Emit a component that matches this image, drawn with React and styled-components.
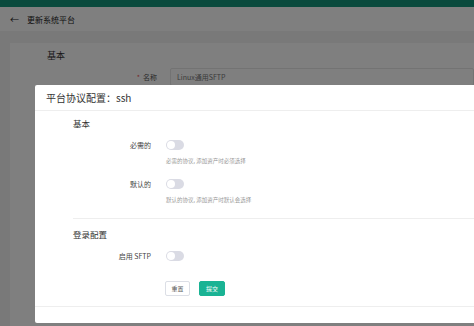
import React from "react";
import styled, { createGlobalStyle } from "styled-components";

const GlobalStyle = createGlobalStyle`
  html, body {
    margin: 0;
    padding: 0;
    background: #f2f2f2;
    font-family: "Noto Sans CJK SC", "Noto Sans", sans-serif;
    color: #333;
    overflow: hidden;
  }
`;

const Page = styled.div`
  width: 474px;
  height: 326px;
  display: flex;
  flex-direction: column;
  background: #f2f2f2;
`;

const TopBar = styled.div`
  height: 7px;
  background: #14957a;
  flex-shrink: 0;
`;

const Header = styled.div`
  height: 24px;
  background: #ffffff;
  display: flex;
  align-items: center;
  gap: 8px;
  padding-left: 10px;
  font-size: 8px;
  color: #222;
`;

const Back = styled.span`
  font-size: 9px;
  line-height: 1;
`;

const Content = styled.div`
  padding: 12px 0 0 10px;
  flex: 1;
`;

const Card = styled.div`
  background: #ffffff;
  height: 100%;
  padding: 7px 0 0 37px;
  box-sizing: border-box;
`;

const CardTitle = styled.div`
  font-size: 9px;
  line-height: 12px;
  color: #333;
`;

const CardRow = styled.div`
  display: grid;
  grid-template-columns: 110px 1fr;
  column-gap: 13px;
  align-items: center;
  margin-top: 6px;
`;

const CardLabel = styled.div`
  text-align: right;
  font-size: 7px;
  color: #555;

  &::before {
    content: "*";
    color: #e55;
    margin-right: 3px;
  }
`;

const Input = styled.div`
  height: 16px;
  border: 1px solid #e6e6e6;
  border-radius: 2px;
  padding-left: 6px;
  font-size: 7px;
  line-height: 16px;
  color: #777;
`;

const Mask = styled.div`
  position: fixed;
  inset: 0;
  background: rgba(0, 0, 0, 0.5);
`;

const Modal = styled.div`
  position: fixed;
  left: 35px;
  top: 85px;
  width: 480px;
  height: 238px;
  background: #ffffff;
  display: flex;
  flex-direction: column;
  border-radius: 2px;
`;

const ModalHeader = styled.div`
  height: 26px;
  box-sizing: border-box;
  border-bottom: 1px solid #eeeeee;
  padding-left: 11px;
  display: flex;
  align-items: center;
  font-size: 10px;
  color: #333;
`;

const ModalBody = styled.div`
  flex: 1;
  padding: 5px 0 0 38px;
`;

const SectionTitle = styled.div`
  font-size: 8.5px;
  line-height: 14px;
  height: 14px;
  color: #333;
  margin-top: ${(p) => p.$top || 0}px;
`;

const Divider = styled.div`
  height: 1px;
  background: #eeeeee;
  margin-top: 13px;
`;

const FormRow = styled.div`
  display: grid;
  grid-template-columns: 78px 1fr;
  column-gap: 15px;
  align-items: center;
  height: 12px;
  margin-top: ${(p) => p.$top}px;
`;

const Label = styled.div`
  text-align: right;
  font-size: 7px;
  color: #444;
  white-space: nowrap;
`;

const Switch = styled.span`
  width: 18px;
  height: 10px;
  border-radius: 5px;
  background: #dadbe4;
  position: relative;
  display: inline-block;

  &::after {
    content: "";
    position: absolute;
    left: 1px;
    top: 1px;
    width: 8px;
    height: 8px;
    border-radius: 50%;
    background: #ffffff;
  }
`;

const Help = styled.div`
  margin-left: 93px;
  margin-top: 5px;
  font-size: 5.5px;
  line-height: 10px;
  height: 10px;
  color: #999;
  white-space: nowrap;
`;

const Actions = styled.div`
  display: flex;
  gap: 9px;
  margin: 19px 0 0 92px;
`;

const Button = styled.button`
  height: 15px;
  width: ${(p) => (p.$primary ? 26 : 25)}px;
  padding: 0;
  border-radius: 2px;
  font-family: inherit;
  font-size: 6px;
  border: 1px solid ${(p) => (p.$primary ? "#1ab394" : "#dcdfe6")};
  background: ${(p) => (p.$primary ? "#1ab394" : "#ffffff")};
  color: ${(p) => (p.$primary ? "#ffffff" : "#555")};
`;

const ModalFooter = styled.div`
  height: 16px;
  border-top: 1px solid #eeeeee;
`;

export default function App() {
  return (
    <>
      <GlobalStyle />
      <Page>
        <TopBar />
        <Header>
          <Back>←</Back>
          <span>更新系统平台</span>
        </Header>
        <Content>
          <Card>
            <CardTitle>基本</CardTitle>
            <CardRow>
              <CardLabel>名称</CardLabel>
              <Input>Linux通用SFTP</Input>
            </CardRow>
          </Card>
        </Content>
      </Page>
      <Mask />
      <Modal>
        <ModalHeader>平台协议配置：ssh</ModalHeader>
        <ModalBody>
          <SectionTitle>基本</SectionTitle>
          <FormRow $top={9}>
            <Label>必需的</Label>
            <Switch />
          </FormRow>
          <Help>必需的协议, 添加资产时必须选择</Help>
          <FormRow $top={12}>
            <Label>默认的</Label>
            <Switch />
          </FormRow>
          <Help>默认的协议, 添加资产时默认会选择</Help>
          <Divider />
          <SectionTitle $top={8}>登录配置</SectionTitle>
          <FormRow $top={9}>
            <Label>启用 SFTP</Label>
            <Switch />
          </FormRow>
          <Actions>
            <Button>重置</Button>
            <Button $primary>提交</Button>
          </Actions>
        </ModalBody>
        <ModalFooter />
      </Modal>
    </>
  );
}
